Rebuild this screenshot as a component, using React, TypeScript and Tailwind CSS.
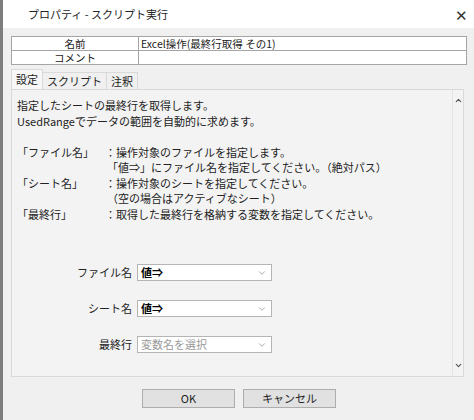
import { ChevronDown, ChevronUp } from 'lucide-react';

const font = { fontFamily: '"Noto Sans CJK JP", "Noto Sans", sans-serif' };

function Select({ value, placeholder }: { value?: string; placeholder?: string }) {
  return (
    <div className="flex h-[17px] w-[135px] items-center justify-between border border-[#b5b5b5] bg-white pl-[3px] pr-[4px]">
      {value ? (
        <span className="text-[11px] font-bold leading-none text-black">{value}</span>
      ) : (
        <span className="text-[11px] leading-none text-[#9a9a9a]">{placeholder}</span>
      )}
      <ChevronDown size={10} strokeWidth={1.5} className="text-[#777]" />
    </div>
  );
}

function FormRow({ label, children }: { label: string; children: React.ReactNode }) {
  return (
    <div className="flex items-center">
      <span className="w-[120px] shrink-0 pr-[5px] text-right text-[11px] leading-none text-[#222]">{label}</span>
      {children}
    </div>
  );
}

export default function App() {
  return (
    <div className="flex h-[420px] w-[474px] overflow-hidden" style={font}>
      <div className="w-[3px] bg-[#7d7d7d]" />
      <div className="flex flex-1 flex-col bg-[#f0f0f0]">
        {/* title bar */}
        <div className="flex h-[28px] items-center justify-between bg-white pl-[25px] pr-[6px]">
          <span className="text-[11px] text-[#222]">プロパティ - スクリプト実行</span>
          <span className="text-[15px] font-light leading-none text-[#333]">✕</span>
        </div>

        {/* name / comment table */}
        <div className="ml-[8px] mr-[7px] mt-[8px] border border-[#a5a5a5] bg-white text-[10.5px] leading-[12px] text-[#222]">
          <div className="flex h-[14px] border-b border-[#a5a5a5]">
            <div className="flex w-[127px] items-center justify-center border-r border-[#a5a5a5]">名前</div>
            <div className="flex items-center pl-[2px]">Excel操作(最終行取得 その1)</div>
          </div>
          <div className="flex h-[13px]">
            <div className="flex w-[127px] items-center justify-center border-r border-[#a5a5a5]">コメント</div>
            <div className="flex-1" />
          </div>
        </div>

        {/* tabs */}
        <div className="ml-[8px] mt-[4px] flex items-end text-[11px] leading-none text-[#222]">
          <div className="flex h-[20px] items-center border border-b-0 border-[#d9d9d9] bg-[#f7f7f7] px-[4px]">設定</div>
          <div className="flex h-[17px] items-center border border-b-0 border-l-0 border-[#d9d9d9] px-[4px]">スクリプト</div>
          <div className="flex h-[17px] items-center border border-b-0 border-l-0 border-[#d9d9d9] px-[4px]">注釈</div>
        </div>

        {/* tab panel */}
        <div className="ml-[8px] mr-[10px] flex h-[288px] border border-[#d9d9d9] bg-[#f3f3f3]">
          <div className="flex flex-1 flex-col pl-[5px] pt-[8px] text-[11px] leading-[15.5px] text-[#222]">
            <div>指定したシートの最終行を取得します。</div>
            <div>UsedRangeでデータの範囲を自動的に求めます。</div>
            <div className="h-[15.5px]" />
            <div className="flex">
              <span className="w-[88px]">「ファイル名」</span>
              <span>：操作対象のファイルを指定します。</span>
            </div>
            <div className="pl-[90px]">「値⇒」にファイル名を指定してください。（絶対パス）</div>
            <div className="flex">
              <span className="w-[88px]">「シート名」</span>
              <span>：操作対象のシートを指定してください。</span>
            </div>
            <div className="pl-[90px]">（空の場合はアクティブなシート）</div>
            <div className="flex">
              <span className="w-[88px]">「最終行」</span>
              <span>：取得した最終行を格納する変数を指定してください。</span>
            </div>

            <div className="mt-[42px] flex flex-col gap-[19px]">
              <FormRow label="ファイル名">
                <Select value="値⇒" />
              </FormRow>
              <FormRow label="シート名">
                <Select value="値⇒" />
              </FormRow>
              <FormRow label="最終行">
                <Select placeholder="変数名を選択" />
              </FormRow>
            </div>
          </div>
          <div className="flex w-[11px] flex-col items-center justify-between border-l border-[#e4e4e4] py-[6px]">
            <ChevronUp size={9} strokeWidth={3} className="text-[#555]" />
            <ChevronDown size={9} strokeWidth={3} className="text-[#555]" />
          </div>
        </div>

        {/* buttons */}
        <div className="mt-[12px] flex gap-[8px] pl-[139px] text-[11px] leading-none text-[#222]">
          <button className="flex h-[19px] w-[93px] items-center justify-center border border-[#adadad] bg-[#e1e1e1]">OK</button>
          <button className="flex h-[19px] w-[93px] items-center justify-center border border-[#adadad] bg-[#e1e1e1]">キャンセル</button>
        </div>
      </div>
    </div>
  );
}
